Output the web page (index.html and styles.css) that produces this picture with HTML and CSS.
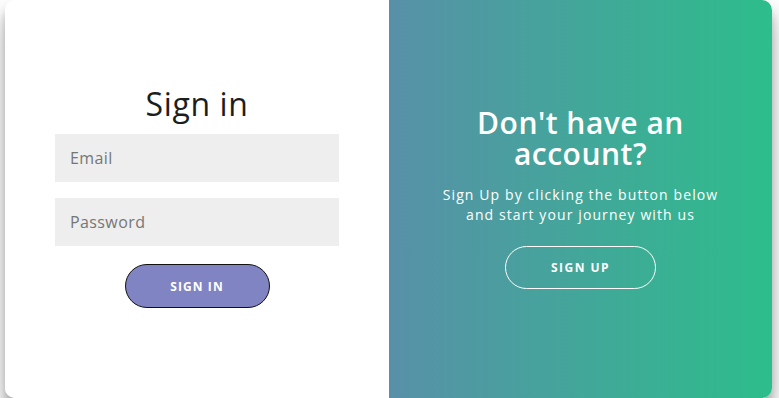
FILE: index.html
```html
<!DOCTYPE html>
<html lang="en">
<head>
<meta charset="utf-8">
<title>Sign in</title>
<link rel="stylesheet" href="styles.css">
</head>
<body>
<div class="card">
  <div class="panel panel-signin">
    <h1 class="signin-title">Sign in</h1>
    <input class="field" type="email" placeholder="Email">
    <input class="field field-gap" type="password" placeholder="Password">
    <button class="btn btn-primary">SIGN IN</button>
  </div>
  <div class="panel panel-overlay">
    <h2 class="overlay-title"><span class="line">Don't have an</span><span class="line">account?</span></h2>
    <p class="overlay-text">Sign Up by clicking the button below<br>and start your journey with us</p>
    <button class="btn btn-ghost">SIGN UP</button>
  </div>
</div>
</body>
</html>
```
FILE: styles.css
```css
html, body {
  margin: 0;
  padding: 0;
  background: #ffffff;
  height: 398px;
  overflow: hidden;
}

body {
  font-family: "Open Sans", "DejaVu Sans", sans-serif;
  padding-left: 5px;
}

.card {
  width: 767px;
  height: 398px;
  display: flex;
  border-radius: 10px;
  overflow: hidden;
  box-shadow: 0 14px 28px rgba(0, 0, 0, 0.25), 0 10px 10px rgba(0, 0, 0, 0.22);
}

.panel {
  display: flex;
  flex-direction: column;
  align-items: center;
  justify-content: center;
  box-sizing: border-box;
}

.panel-signin {
  width: 384px;
  background: #ffffff;
  padding-bottom: 6px;
}

.panel-overlay {
  flex: 1;
  background: linear-gradient(to right, #5890a8, #2dbd8b);
  color: #ffffff;
  text-align: center;
  padding-bottom: 2px;
}

.signin-title {
  margin: 0 0 11px;
  font-size: 32px;
  line-height: 39px;
  font-weight: 400;
  letter-spacing: 0.6px;
  color: #1d1d1d;
}

.field {
  width: 284px;
  height: 48px;
  box-sizing: border-box;
  border: none;
  outline: none;
  background: #eeeeee;
  padding: 0 15px;
  font-family: inherit;
  font-size: 16px;
  letter-spacing: 0.4px;
  color: #333;
}

.field::placeholder {
  color: #767676;
}

.field-gap {
  margin-top: 16px;
}

.btn {
  font-family: inherit;
  font-size: 12px;
  font-weight: 700;
  letter-spacing: 1.1px;
  border-radius: 22px;
  box-sizing: border-box;
  cursor: pointer;
}

.btn-primary {
  margin-top: 18px;
  width: 145px;
  height: 44px;
  background: #8184c2;
  border: 1px solid #111;
  color: #ffffff;
}

.overlay-title {
  margin: 0;
  font-size: 30px;
  font-weight: 600;
  letter-spacing: 0.5px;
}

.line {
  display: block;
  height: 31px;
  line-height: 31px;
}

.overlay-text {
  margin: 16px 0 0;
  font-size: 14px;
  line-height: 20px;
  letter-spacing: 1.1px;
}

.btn-ghost {
  margin-top: 21px;
  width: 151px;
  height: 43px;
  background: transparent;
  border: 1px solid #ffffff;
  color: #ffffff;
  letter-spacing: 1.5px;
}
```
